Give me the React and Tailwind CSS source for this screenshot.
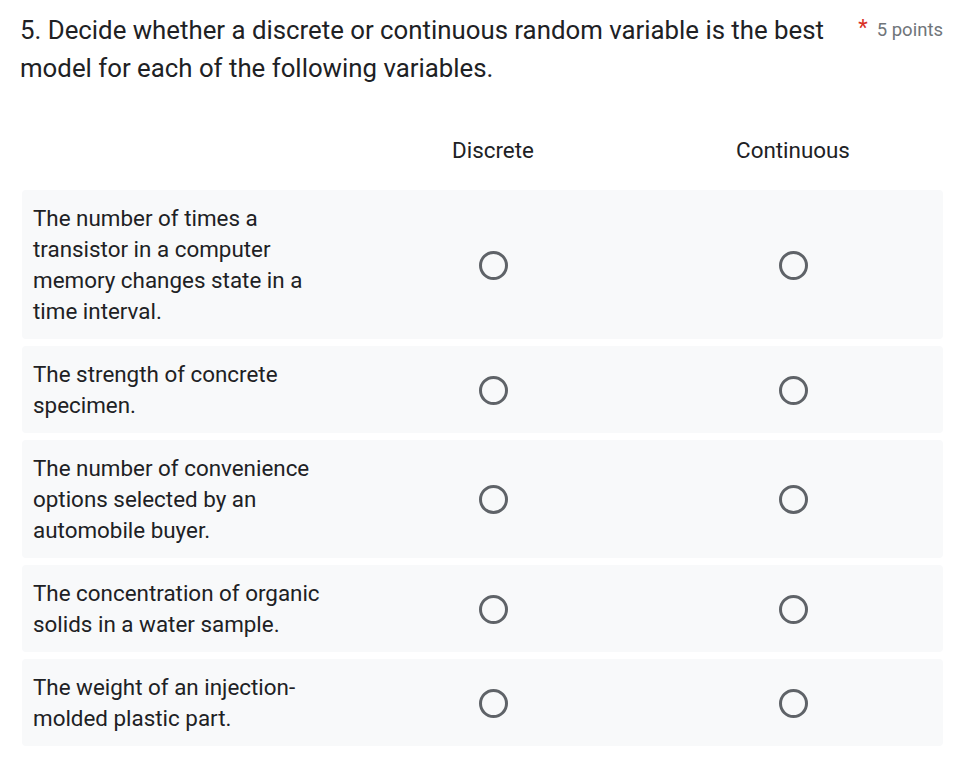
const rows = [
  ['The number of times a', 'transistor in a computer', 'memory changes state in a', 'time interval.'],
  ['The strength of concrete', 'specimen.'],
  ['The number of convenience', 'options selected by an', 'automobile buyer.'],
  ['The concentration of organic', 'solids in a water sample.'],
  ['The weight of an injection-', 'molded plastic part.'],
];

function Radio() {
  return <span className="block w-[29px] h-[29px] rounded-full border-[3px] border-[#5f6368]" />;
}

export default function App() {
  return (
    <div className="w-[976px] h-[782px] bg-white text-[#202124]" style={{ fontFamily: 'Roboto, "Liberation Sans", sans-serif' }}>
      {/* Question header */}
      <div className="flex items-start pl-[20px] pr-[33px] pt-[11px]">
        <h1 className="flex-1 text-[25.8px] leading-[38px] font-normal pr-[20px]">
          5. Decide whether a discrete or continuous random variable is the best model for each of the following variables.
        </h1>
        <div className="flex items-center gap-[9px] pt-[9px] shrink-0">
          <span className="text-[#d93025] text-[22px] leading-[20px] -mt-[4px]">*</span>
          <span className="text-[#70757a] text-[18.5px] leading-[20px]">5 points</span>
        </div>
      </div>

      {/* Grid */}
      <div className="ml-[22px] mt-[33px] w-[921px]">
        <div className="grid grid-cols-[321px_300px_300px] h-[62px] items-center text-[22.4px]">
          <div />
          <div className="text-center">Discrete</div>
          <div className="text-center">Continuous</div>
        </div>
        <div className="flex flex-col gap-[7px] mt-[8px]">
          {rows.map((lines, i) => (
            <div key={i} className="grid grid-cols-[321px_300px_300px] items-center bg-[#f8f9fa] rounded-[4px] pt-[13px] pb-[12px]">
              <div className="pl-[11px] text-[22.4px] leading-[31px]">
                {lines.map((l) => (
                  <div key={l} className="whitespace-nowrap">{l}</div>
                ))}
              </div>
              <div className="flex justify-center"><Radio /></div>
              <div className="flex justify-center"><Radio /></div>
            </div>
          ))}
        </div>
      </div>
    </div>
  );
}
